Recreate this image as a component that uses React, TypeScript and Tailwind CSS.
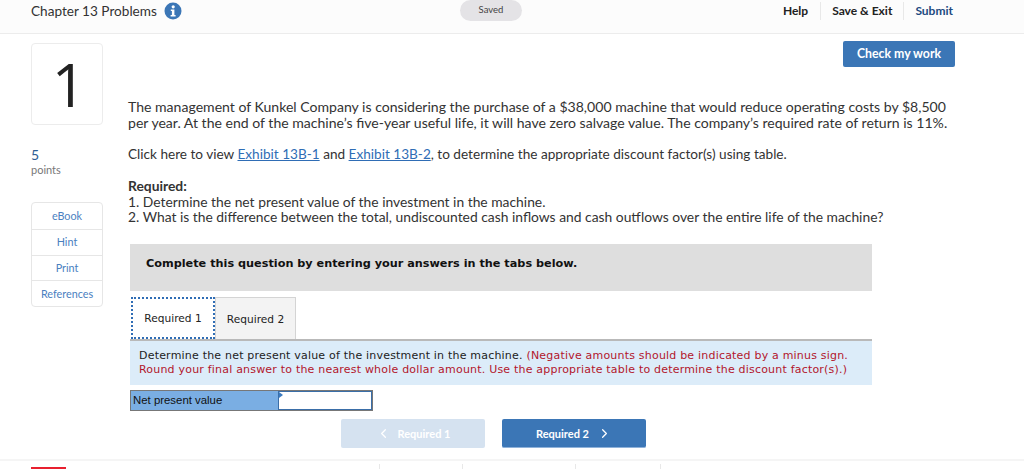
import { ChevronLeft, ChevronRight } from 'lucide-react'

const sideLinks = ['eBook', 'Hint', 'Print', 'References']
const footerDividers = ['w-[83px]', 'w-[113px]', 'w-[85px]', 'w-0']

const proxima = "font-['Lato','Open_Sans',sans-serif]"
const verdana = "font-['DejaVu_Sans',sans-serif]"

function InfoIcon() {
  return (
    <svg width="18" height="18" viewBox="0 0 18 18">
      <circle cx="9" cy="9" r="8.5" fill="#3b76b6" />
      <circle cx="9.2" cy="4.8" r="1.6" fill="#fff" />
      <path d="M6.8 7.4h3.6v5.6h1.2v1.5H6.6V13h1.3V8.9H6.8z" fill="#fff" />
    </svg>
  )
}

function Header() {
  return (
    <header className="flex h-[34px] shrink-0 items-start border-b border-[#ececec] bg-[#fcfcfc]">
      <div className="flex w-[460px] items-center pl-[31px] pt-[1px]">
        <span className="text-[13.6px] text-[#333]">Chapter 13 Problems</span>
        <span className="ml-[7px] flex"><InfoIcon /></span>
      </div>
      <div className="flex h-[21px] w-[62px] items-center justify-center rounded-full bg-[#e4e3e6] text-[9.5px] text-[#444]">
        Saved
      </div>
      <nav className="ml-auto flex items-center pr-[71px] pt-[2px] text-[12px] font-bold text-[#222]">
        <span className="border-r border-[#e8e8e8] pr-[12px] leading-[18px]">Help</span>
        <span className="border-r border-[#e8e8e8] px-[11px] leading-[18px]">Save &amp; Exit</span>
        <span className="pl-[11px] leading-[18px] text-[#1c4a80]">Submit</span>
      </nav>
    </header>
  )
}

function Sidebar() {
  return (
    <aside className="ml-[31px] w-[72px] shrink-0 pt-[9px]">
      <div className="flex h-[82px] items-center justify-center rounded-[4px] border border-[#ececec] pl-[4px]">
        <span className="font-['Open_Sans',sans-serif] text-[60px] font-medium leading-none text-[#222]">1</span>
      </div>
      <div className="mt-[22px] text-[14px] leading-[16px] text-[#2d5d94]">5</div>
      <div className="text-[11px] leading-[14px] text-[#777]">points</div>
      <ul className="mt-[25px] rounded-[4px] border border-[#e6e6e6] text-center text-[10.8px] text-[#4a80bf]">
        {sideLinks.map((label, i) => (
          <li key={label} className={`flex h-[25.75px] items-center justify-center ${i > 0 ? 'border-t border-[#e6e6e6]' : ''}`}>
            {label}
          </li>
        ))}
      </ul>
    </aside>
  )
}

function Tabs() {
  return (
    <div className={`${verdana} ml-[1px] mt-[6px] flex h-[42px] text-[10.6px] text-[#222]`}>
      <div className="flex w-[84px] items-center justify-center border-2 border-dotted border-[#2f6db5] bg-white pt-[1px]">Required 1</div>
      <div className="flex w-[81px] items-center justify-center border border-b-0 border-[#d4d4d4] bg-[#f3f3f3] pt-[1px]">Required 2</div>
    </div>
  )
}

function Question() {
  return (
    <div className="w-[742px]">
      <div className={`${verdana} flex h-[47px] items-start bg-[#dedede] pl-[16px] pt-[12px] text-[11.26px] font-bold text-[#111]`}>
        Complete this question by entering your answers in the tabs below.
      </div>
      <Tabs />
      <div className={`${verdana} h-[46px] border-t-2 border-[#b9b9b9] bg-[#dcecf9] pl-[9px] pt-[8px] text-[11px] leading-[14px] tracking-[0.2px] text-[#222]`}>
        Determine the net present value of the investment in the machine.{' '}
        <span className="text-[#b3162c]">(Negative amounts should be indicated by a minus sign.</span>
        <br />
        <span className="text-[#b3162c]">Round your final answer to the nearest whole dollar amount. Use the appropriate table to determine the discount factor(s).)</span>
      </div>
      <div className="mt-[5px] flex h-[21px] w-[243px] border border-[#777] font-['Liberation_Sans',sans-serif] text-[11.4px] text-[#111]">
        <div className="flex w-[147px] items-center bg-[#7aaee3] pl-[2px]">Net present value</div>
        <div className="relative flex-1 border border-[#3a6ea8] bg-white">
          <span className="absolute left-0 top-0 border-y-[3px] border-l-[4px] border-y-transparent border-l-[#3a7ac0]" />
        </div>
      </div>
      <div className="mt-[8px] flex justify-center gap-[17px] text-[11px] font-bold text-white">
        <div className="ml-[-15px] flex h-[29px] w-[144px] items-center justify-center rounded-[2px] bg-[#d5e2f0] pt-[1px]">
          <ChevronLeft size={15} className="mr-[7px]" />
          Required 1
        </div>
        <div className="flex h-[29px] w-[144px] items-center justify-center rounded-[2px] border-b border-[#8fb2da] bg-[#3b76b6] pt-[2px]">
          Required 2
          <ChevronRight size={15} className="ml-[8px]" />
        </div>
      </div>
    </div>
  )
}

function Content() {
  return (
    <main className="ml-[25px] flex-1 text-[14.07px] leading-[16px] text-[#333]">
      <div className="flex justify-end pr-[69px] pt-[7px]">
        <button className="h-[26px] w-[112px] rounded-[2px] bg-[#3b76b6] text-[12.3px] font-bold text-white">Check my work</button>
      </div>
      <p className="mt-[32px]">
        The management of Kunkel Company is considering the purchase of a $38,000 machine that would reduce operating costs by $8,500
        <br />
        per year. At the end of the machine’s five-year useful life, it will have zero salvage value. The company’s required rate of return is 11%.
      </p>
      <p className="mt-[15px] text-[13.6px]">
        Click here to view <span className="text-[#2f6db5] underline">Exhibit 13B-1</span> and{' '}
        <span className="text-[#2f6db5] underline">Exhibit 13B-2</span>, to determine the appropriate discount factor(s) using table.
      </p>
      <p className="mt-[16px] text-[13.85px] leading-[15.5px]">
        <strong>Required:</strong>
        <br />
        1. Determine the net present value of the investment in the machine.
        <br />
        2. What is the difference between the total, undiscounted cash inflows and cash outflows over the entire life of the machine?
      </p>
      <div className="ml-[2px] mt-[19px]">
        <Question />
      </div>
    </main>
  )
}

function Footer() {
  return (
    <footer className="flex h-[10px] shrink-0 items-end border-t-2 border-[#f5f5f5]">
      <div className="ml-[31px] h-[2px] w-[35px] bg-[#e8202f]" />
      <div className="ml-[313px] flex h-[5px]">
        {footerDividers.map((width, i) => (
          <span key={i} className={`${width} border-l border-[#e8e8e8]`} />
        ))}
      </div>
    </footer>
  )
}

export default function App() {
  return (
    <div className={`${proxima} flex h-[471px] w-[1024px] flex-col overflow-hidden bg-white`}>
      <Header />
      <div className="flex h-[425px] shrink-0">
        <Sidebar />
        <Content />
      </div>
      <Footer />
    </div>
  )
}
